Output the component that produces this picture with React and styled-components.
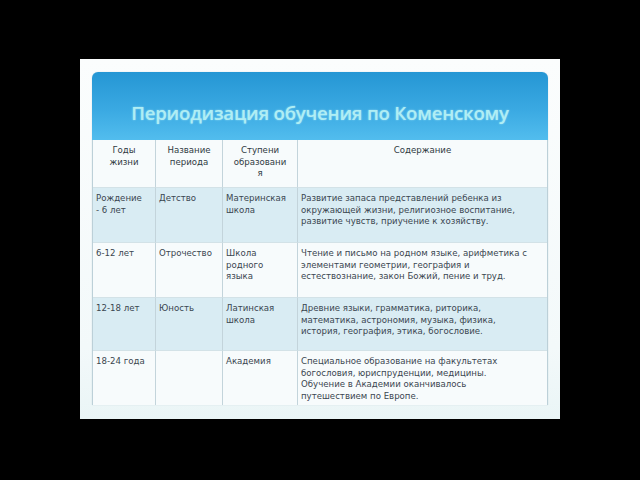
import React from "react";
import styled, { createGlobalStyle } from "styled-components";

const GlobalStyle = createGlobalStyle`
  html, body {
    margin: 0;
    padding: 0;
    background: #000;
  }
  #root {
    height: 480px;
  }
`;

const Screen = styled.div`
  width: 640px;
  height: 480px;
  display: flex;
  align-items: center;
  justify-content: center;
  background: #000;
  padding-bottom: 2px;
  box-sizing: border-box;
`;

const Slide = styled.div`
  width: 480px;
  height: 360px;
  box-sizing: border-box;
  padding: 13px 12px 0 12px;
  background: linear-gradient(180deg, #fbfdfd 0%, #f3f9fa 80%, #eaf5f6 100%);
`;

const Panel = styled.div`
  width: 456px;
  border-radius: 6px 6px 0 0;
  overflow: hidden;
  box-shadow: 0 0 1px rgba(120, 160, 180, 0.6);
`;

const TitleBar = styled.div`
  height: 68px;
  display: flex;
  align-items: center;
  justify-content: center;
  padding-top: 12px;
  box-sizing: border-box;
  background: linear-gradient(180deg, #2596d4 0%, #3aa9e2 55%, #52bdee 100%);
`;

const Title = styled.h1`
  margin: 0;
  font-family: "Open Sans", "Liberation Sans", sans-serif;
  font-size: 18.6px;
  font-weight: 600;
  letter-spacing: -0.2px;
  color: #b0eef4;
  text-shadow: 0 0 2px rgba(200, 250, 255, 0.6);
`;

const Table = styled.div`
  display: grid;
  grid-template-columns: 63px 67px 75px 1fr;
  grid-template-rows: 48px 55px 55px 53px 54px;
  background: #f7fbfc;
  border-left: 1px solid #bcd0d8;
  border-right: 1px solid #bcd0d8;
  font-family: "DejaVu Sans", "Liberation Sans", sans-serif;
  font-size: 8.6px;
  line-height: 11.6px;
  color: #3a4650;
`;

const Cell = styled.div`
  box-sizing: border-box;
  padding: ${(p) => (p.$head ? "5px 1px 0" : "5px 2px 0 3px")};
  text-align: ${(p) => (p.$head ? "center" : "left")};
  background: ${(p) => (p.$tint ? "#d9ecf3" : "transparent")};
  border-right: ${(p) => (p.$last ? "none" : "1px solid #c3d4db")};
  border-bottom: ${(p) => (p.$end ? "none" : "1px solid #d3e2e7")};
  color: ${(p) => (p.$head ? "#2f3a42" : "#3a4650")};
  white-space: nowrap;
  overflow: hidden;
`;

const head = [
  ["Годы", "жизни"],
  ["Название", "периода"],
  ["Ступени", "образовани", "я"],
  ["Содержание"],
];

const rows = [
  [
    ["Рождение", "- 6 лет"],
    ["Детство"],
    ["Материнская", "школа"],
    [
      "Развитие запаса представлений ребенка из",
      "окружающей жизни, религиозное воспитание,",
      "развитие чувств, приучение к хозяйству.",
    ],
  ],
  [
    ["6-12 лет"],
    ["Отрочество"],
    ["Школа", "родного", "языка"],
    [
      "Чтение и письмо на родном языке, арифметика с",
      "элементами геометрии, география и",
      "естествознание, закон Божий, пение и труд.",
    ],
  ],
  [
    ["12-18 лет"],
    ["Юность"],
    ["Латинская", "школа"],
    [
      "Древние языки, грамматика, риторика,",
      "математика, астрономия, музыка, физика,",
      "история, география, этика, богословие.",
    ],
  ],
  [
    ["18-24 года"],
    [],
    ["Академия"],
    [
      "Специальное образование на факультетах",
      "богословия, юриспруденции, медицины.",
      "Обучение в Академии оканчивалось",
      "путешествием по Европе.",
    ],
  ],
];

const Lines = ({ lines }) =>
  lines.map((l, i) => (
    <React.Fragment key={i}>
      {i > 0 && <br />}
      {l}
    </React.Fragment>
  ));

export default function App() {
  return (
    <>
      <GlobalStyle />
      <Screen>
        <Slide>
          <Panel>
            <TitleBar>
              <Title>Периодизация обучения по Коменскому</Title>
            </TitleBar>
            <Table>
              {head.map((h, i) => (
                <Cell key={"h" + i} $head $last={i === 3}>
                  <Lines lines={h} />
                </Cell>
              ))}
              {rows.map((r, ri) =>
                r.map((c, ci) => (
                  <Cell
                    key={ri + "-" + ci}
                    $tint={ri % 2 === 0}
                    $last={ci === 3}
                    $end={ri === rows.length - 1}
                  >
                    <Lines lines={c} />
                  </Cell>
                ))
              )}
            </Table>
          </Panel>
        </Slide>
      </Screen>
    </>
  );
}
